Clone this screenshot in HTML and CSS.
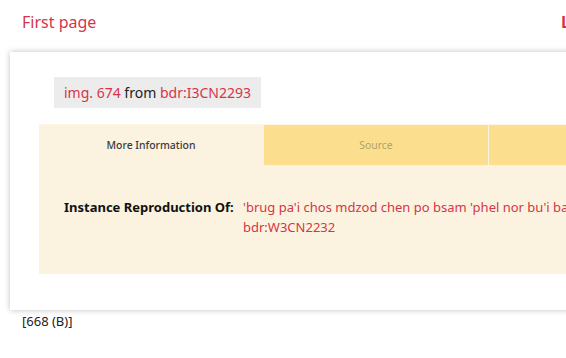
FILE: index.html
```html
<!DOCTYPE html>
<html lang="en">

<head>
    <meta charset="UTF-8">
    <meta name="viewport" content="width=device-width, initial-scale=1.0">
    <title>Image viewer</title>
    <link rel="stylesheet" href="styles.css">
</head>

<body>
    <div class="page">
        <div class="pager">
            <a href="#" class="pager-link">First page</a>
            <a href="#" class="pager-link last">Last page</a>
        </div>

        <div class="card">
            <div class="badge">
                <a href="#">img. 674</a> from <a href="#">bdr:I3CN2293</a>
            </div>

            <div class="panel">
                <div class="tabs">
                    <div class="tab active">More Information</div>
                    <div class="tab">Source</div>
                    <div class="tab">Details</div>
                </div>
                <div class="info">
                    <div class="info-label">Instance Reproduction Of:</div>
                    <div class="info-value">
                        <a href="#">'brug pa'i chos mdzod chen po bsam 'phel nor bu'i bang mdzod</a>
                        <a href="#">bdr:W3CN2232</a>
                    </div>
                </div>
            </div>
        </div>

        <div class="caption">[668 (B)]</div>
    </div>
</body>

</html>
```

FILE: styles.css
```css
body {
    font-family: "Noto Sans", sans-serif;
    margin: 0;
    padding: 0;
    background-color: #fff;
    overflow: hidden;
}

a {
    color: #d73449;
    text-decoration: none;
}

.page {
    width: 680px;
}

.pager {
    display: flex;
    justify-content: space-between;
    padding: 11px 0 0 22px;
    height: 52px;
    box-sizing: border-box;
    width: 640px;
}

.pager-link {
    font-size: 16px;
    line-height: 22px;
}

.pager-link.last {
    margin-right: 2px;
    font-weight: bold;
}

.card {
    margin-left: 10px;
    background-color: #fff;
    box-shadow: 0 0 6px rgba(0, 0, 0, 0.25);
    padding: 25px 0 36px 29px;
}

.badge {
    display: inline-block;
    margin-left: 15px;
    background-color: #ececec;
    padding: 0 10px;
    height: 31px;
    line-height: 31px;
    font-size: 14px;
    color: #222;
}

.panel {
    margin-top: 16px;
    background-color: #fbf3e0;
}

.tabs {
    display: flex;
    height: 41px;
    border-top: 1px solid #fdf6e6;
    box-sizing: border-box;
}

.tab {
    width: 224px;
    flex-shrink: 0;
    margin-right: 1px;
    display: flex;
    align-items: center;
    justify-content: center;
    font-size: 10.4px;
    color: #b09f68;
    background-color: #fbdf8e;
}

.tab.active {
    background-color: #fbf3e0;
    color: #3a3a3a;
    font-weight: 500;
}

.info {
    display: flex;
    padding: 32px 0 37px 25px;
    font-size: 13px;
    line-height: 20px;
}

.info-label {
    font-weight: bold;
    color: #111;
    width: 179px;
    flex-shrink: 0;
}

.info-value {
    display: flex;
    flex-direction: column;
    white-space: nowrap;
}

.caption {
    padding: 2px 22px;
    font-size: 13px;
    color: #222;
}
```
